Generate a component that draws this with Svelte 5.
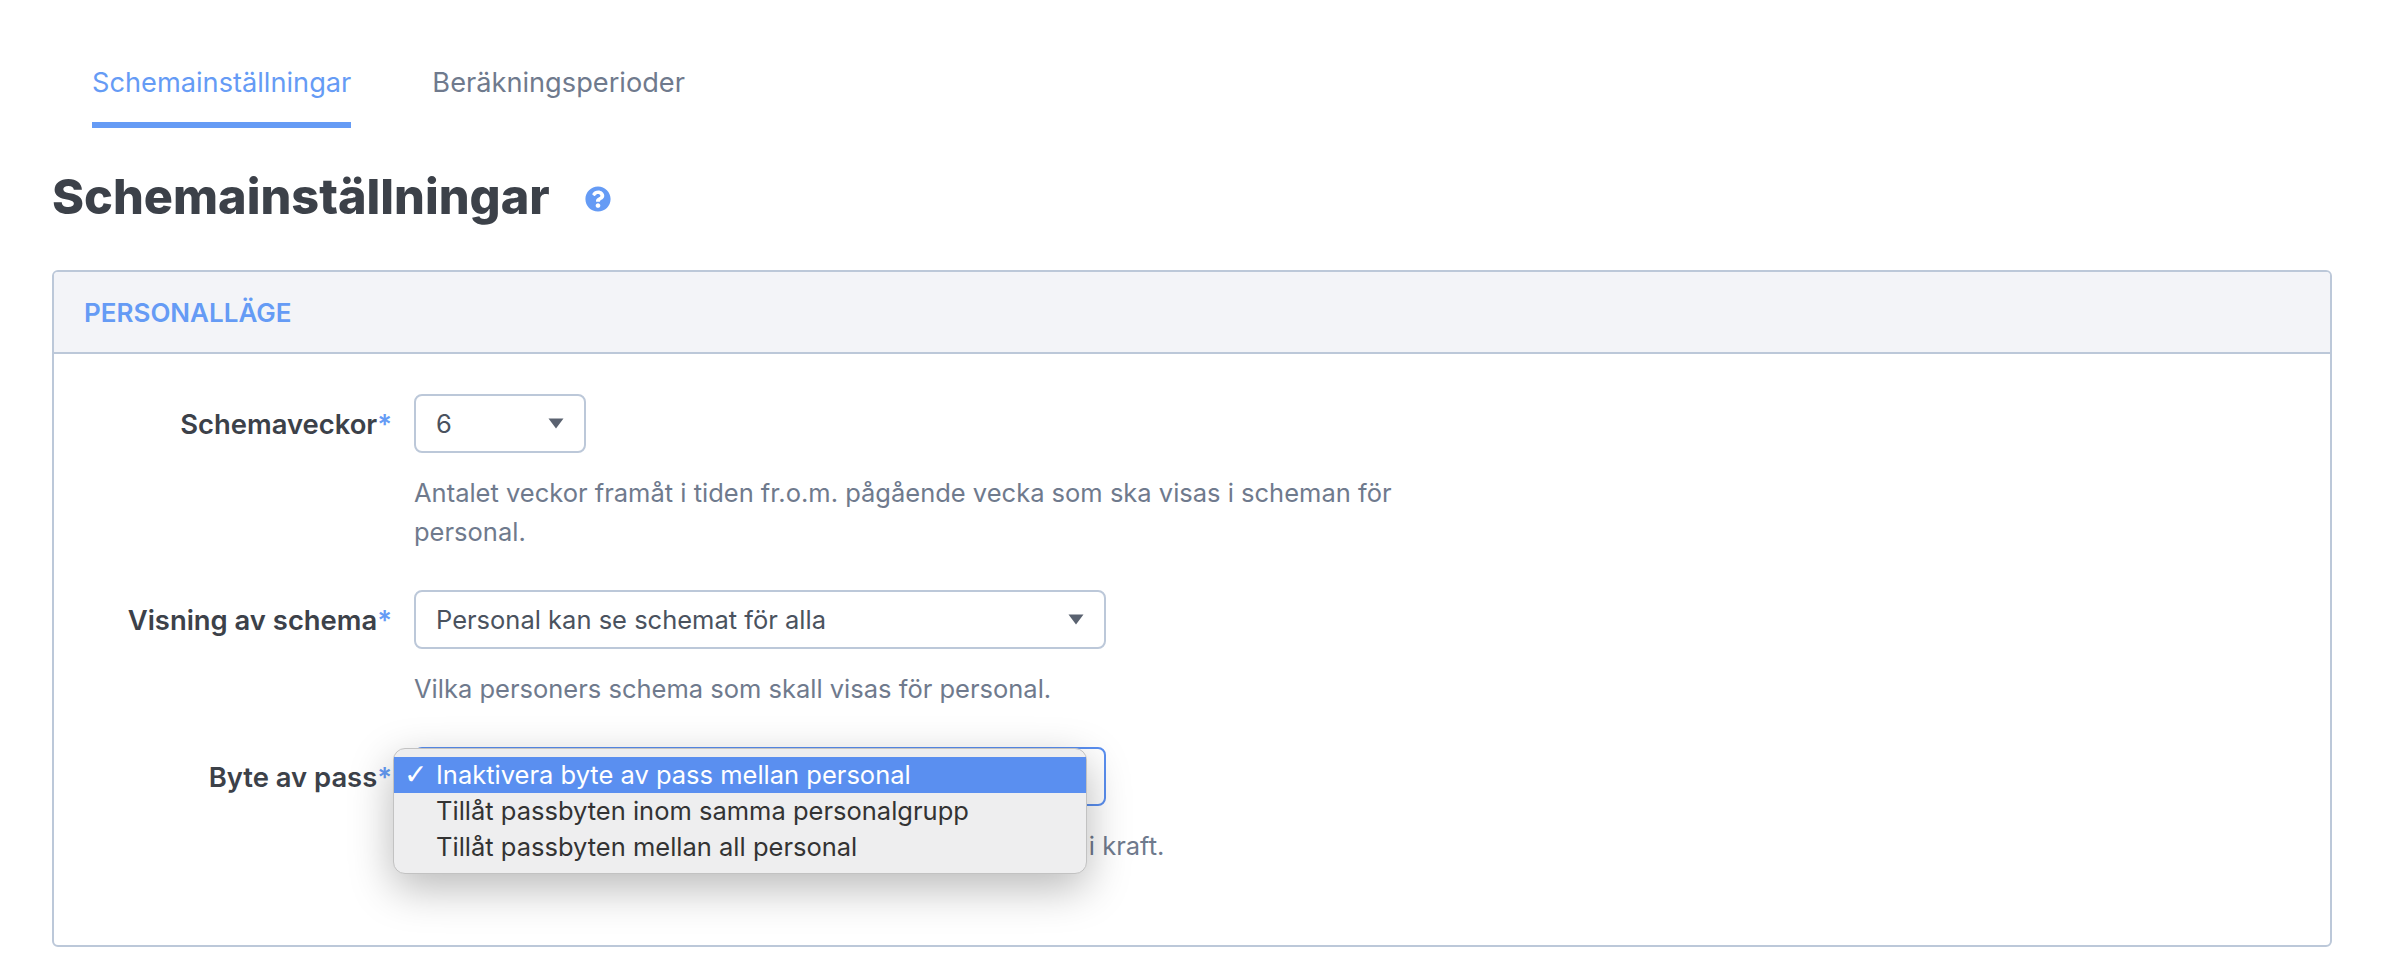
<script>
  const options = [
    'Inaktivera byte av pass mellan personal',
    'Tillåt passbyten inom samma personalgrupp',
    'Tillåt passbyten mellan all personal'
  ];
</script>

{#snippet caret()}
  <svg class="caret" viewBox="0 0 16 11" aria-hidden="true"><path d="M0.5 0.5h15L8 10.5z" /></svg>
{/snippet}

<div class="page">
  <nav class="tabs">
    <span class="tab active">Schemainställningar</span>
    <span class="tab">Beräkningsperioder</span>
  </nav>

  <div class="title">
    <h1>Schemainställningar</h1>
    <svg class="help" viewBox="0 0 512 512" aria-hidden="true">
      <path d="M504 256c0 136.997-111.043 248-248 248S8 392.997 8 256C8 119.083 119.043 8 256 8s248 111.083 248 248zM262.655 90c-54.497 0-89.255 22.957-116.549 63.758-3.536 5.286-2.353 12.415 2.715 16.258l34.699 26.31c5.205 3.947 12.621 3.008 16.665-2.122 17.864-22.658 30.113-35.797 57.303-35.797 20.429 0 45.698 13.148 45.698 32.958 0 14.976-12.363 22.667-32.534 33.976C247.128 238.528 216 254.941 216 296v4c0 6.627 5.373 12 12 12h56c6.627 0 12-5.373 12-12v-1.333c0-28.462 83.186-29.647 83.186-106.667 0-58.002-60.165-102-116.531-102zM256 338c-25.365 0-46 20.635-46 46 0 25.364 20.635 46 46 46s46-20.636 46-46c0-25.365-20.635-46-46-46z" />
    </svg>
  </div>

  <section class="card">
    <header class="card-head">PERSONALLÄGE</header>
    <div class="card-body">
      <div class="row">
        <span class="label">Schemaveckor<span class="req">*</span></span>
        <div class="field">
          <div class="select short"><span>6</span>{@render caret()}</div>
          <p class="hint">Antalet veckor framåt i tiden fr.o.m. pågående vecka som ska visas i scheman för personal.</p>
        </div>
      </div>

      <div class="row">
        <span class="label">Visning av schema<span class="req">*</span></span>
        <div class="field">
          <div class="select"><span>Personal kan se schemat för alla</span>{@render caret()}</div>
          <p class="hint">Vilka personers schema som skall visas för personal.</p>
        </div>
      </div>

      <div class="row">
        <span class="label">Byte av pass<span class="req">*</span></span>
        <div class="field">
          <div class="select focused">
            {@render caret()}
            <ul class="menu">
              {#each options as option, i}
                <li class:selected={i === 0}>
                  {#if i === 0}<span class="check">✓</span>{/if}{option}
                </li>
              {/each}
            </ul>
          </div>
          <p class="hint">Hur personal får byta pass. Ändringar träder omgående i kraft.</p>
        </div>
      </div>
    </div>
  </section>
</div>

<style>
  :global(body) {
    margin: 0;
    background: #fff;
    font-family: Inter, "Liberation Sans", sans-serif;
    color: #3c4149;
  }
  .page {
    padding: 0 54px 0 52px;
    height: 962px;
    box-sizing: border-box;
    overflow: hidden;
  }
  .tabs {
    display: flex;
    gap: 81px;
    padding: 63px 0 0 40px;
  }
  .tab {
    font-size: 27.2px;
    line-height: 39px;
    padding-bottom: 20px;
    border-bottom: 6px solid transparent;
    color: #6f7a8d;
  }
  .tab.active {
    color: #659bf5;
    border-bottom-color: #659bf5;
  }
  .title {
    display: flex;
    align-items: center;
    gap: 35px;
    margin: 41px 0 41px;
    height: 60px;
  }
  h1 {
    margin: 0 0 4px;
    font-size: 48.6px;
    line-height: 56px;
    font-weight: 800;
    color: #3c4149;
  }
  .help {
    width: 26px;
    height: 26px;
    fill: #659bf5;
  }
  .card {
    border: 2px solid #bcc8d9;
    border-radius: 6px;
  }
  .card-head {
    height: 80px;
    display: flex;
    align-items: center;
    padding-left: 30px;
    background: #f3f4f8;
    border-bottom: 2px solid #bcc8d9;
    border-radius: 4px 4px 0 0;
    color: #659bf5;
    font-size: 26px;
    font-weight: 600;
  }
  .card-body {
    display: flex;
    flex-direction: column;
    gap: 39px;
    padding: 40px 0 80px;
  }
  .row {
    display: grid;
    grid-template-columns: 338px 1fr;
    column-gap: 22px;
  }
  .label {
    justify-self: end;
    font-size: 27.4px;
    font-weight: 600;
    line-height: 60px;
    color: #3c4149;
  }
  .req {
    color: #659bf5;
  }
  .field {
    display: flex;
    flex-direction: column;
    align-items: flex-start;
  }
  .select {
    position: relative;
    box-sizing: border-box;
    width: 692px;
    height: 59px;
    display: flex;
    align-items: center;
    justify-content: space-between;
    padding: 0 20px 0 20px;
    border: 2px solid #bcc8d9;
    border-radius: 8px;
    background: #fff;
    font-size: 25.5px;
    color: #4a525e;
  }
  .select.short {
    width: 172px;
  }
  .select.focused {
    border-color: #5a8ff0;
    justify-content: flex-end;
  }
  .caret {
    width: 16px;
    height: 11px;
    fill: #5a6270;
    flex: none;
  }
  .hint {
    margin: 20px 0 0;
    max-width: 1000px;
    font-size: 25.5px;
    line-height: 39px;
    color: #6f7a8d;
  }
  .menu {
    position: absolute;
    left: -23px;
    top: -1px;
    z-index: 2;
    box-sizing: border-box;
    width: 694px;
    margin: 0;
    padding: 8px 0;
    list-style: none;
    background: #eeeeef;
    border: 1px solid #c2c2c2;
    border-radius: 12px;
    box-shadow: 0 14px 44px rgba(0, 0, 0, 0.28);
    color: #333;
    font-size: 25.5px;
  }
  .menu li {
    position: relative;
    height: 36px;
    line-height: 36px;
    padding-left: 42px;
    white-space: nowrap;
  }
  .menu li.selected {
    background: #5a8ff0;
    color: #fff;
  }
  .check {
    position: absolute;
    left: 10px;
    font-family: "DejaVu Sans", sans-serif;
    font-size: 28px;
  }
</style>
